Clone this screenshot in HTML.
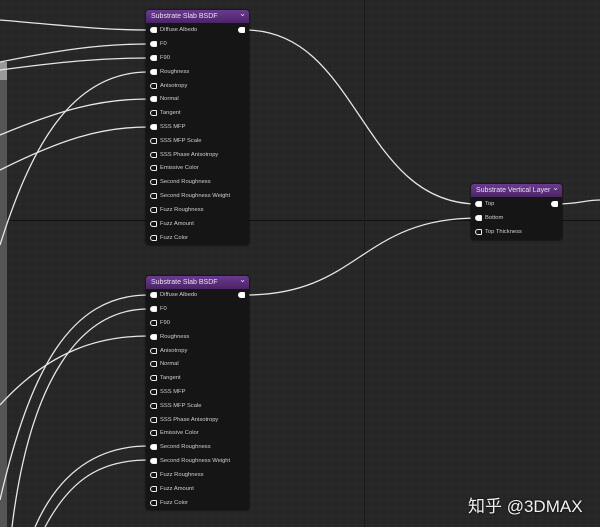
<!DOCTYPE html><html><head><style>
body{margin:0;width:600px;height:527px;overflow:hidden;background:#262626;font-family:"Liberation Sans",sans-serif}
.n{position:absolute;background:#151515;border-radius:3px;box-shadow:0 0 2px #000}
.h{height:13px;background:linear-gradient(#6a3a90,#4b2466);color:#e8e0f0;font-size:7px;line-height:13px;padding-left:5px;border-radius:3px 3px 0 0;position:relative}
.h:after{content:"⌄";position:absolute;right:3px;top:-3px;font-size:8px}
.r{position:absolute;left:14px;font-size:5.8px;color:#cfcfcf;white-space:nowrap}
.p{position:absolute;left:-10px;top:-0.5px;width:5px;height:4px;border:1.2px solid #eee;border-radius:3px 1px 1px 3px;box-sizing:content-box}
.f{background:#fff}
.o{position:absolute;width:7px;height:6px;background:#fff;border-radius:3px 1px 1px 3px}
</style></head><body>
<svg width="600" height="527" style="position:absolute;left:0;top:0">
<defs><pattern id="g" width="8" height="8" patternUnits="userSpaceOnUse" x="5" y="5"><path d="M8 0V8M0 8H8" stroke="#2f2f2f" stroke-width="1"/></pattern></defs>
<rect width="600" height="527" fill="url(#g)"/>
<line x1="0" y1="220.5" x2="600" y2="220.5" stroke="#111"/>
<line x1="364.5" y1="0" x2="364.5" y2="527" stroke="#1a1a1a"/>
<rect x="0" y="62" width="7" height="465" fill="#555"/>
<rect x="0" y="62" width="7" height="18" fill="#999"/>
<g fill="none" stroke="#e6e6e6" stroke-width="1.3">
<path d="M0 20C60 25 100 30 148 30"/>
<path d="M0 62C60 50 100 44 148 44"/>
<path d="M0 70C60 62 100 58 148 58"/>
<path d="M0 245C30 150 70 72 148 72"/>
<path d="M0 135C60 110 100 99 148 99"/>
<path d="M0 170C60 140 100 127 148 127"/>
<path d="M0 500C30 370 70 295 148 295"/>
<path d="M12 527C30 380 80 309 148 309"/>
<path d="M0 405C50 350 100 336 148 336"/>
<path d="M35 527C60 470 100 446 148 446"/>
<path d="M45 527C70 480 100 460 148 460"/>
<path d="M245 30C360 30 360 204 478 204"/>
<path d="M245 295C360 295 360 218 478 218"/>
<path d="M556 204C580 204 585 200 600 200"/>
</g>
</svg>

<div class="n" style="left:146px;top:10px;width:103px;height:235px"><div class="h">Substrate Slab BSDF</div>
<div class="o" style="left:92px;top:17px"></div>
<div class="r" style="top:17px"><i class="p f"></i>Diffuse Albedo</div>
<div class="r" style="top:31px"><i class="p f"></i>F0</div>
<div class="r" style="top:45px"><i class="p f"></i>F90</div>
<div class="r" style="top:59px"><i class="p f"></i>Roughness</div>
<div class="r" style="top:73px"><i class="p"></i>Anisotropy</div>
<div class="r" style="top:86px"><i class="p f"></i>Normal</div>
<div class="r" style="top:100px"><i class="p"></i>Tangent</div>
<div class="r" style="top:114px"><i class="p f"></i>SSS MFP</div>
<div class="r" style="top:128px"><i class="p"></i>SSS MFP Scale</div>
<div class="r" style="top:142px"><i class="p"></i>SSS Phase Anisotropy</div>
<div class="r" style="top:155px"><i class="p"></i>Emissive Color</div>
<div class="r" style="top:169px"><i class="p"></i>Second Roughness</div>
<div class="r" style="top:183px"><i class="p"></i>Second Roughness Weight</div>
<div class="r" style="top:197px"><i class="p"></i>Fuzz Roughness</div>
<div class="r" style="top:211px"><i class="p"></i>Fuzz Amount</div>
<div class="r" style="top:225px"><i class="p"></i>Fuzz Color</div>
</div>

<div class="n" style="left:146px;top:276px;width:103px;height:234px"><div class="h">Substrate Slab BSDF</div>
<div class="o" style="left:92px;top:16px"></div>
<div class="r" style="top:16px"><i class="p f"></i>Diffuse Albedo</div>
<div class="r" style="top:30px"><i class="p f"></i>F0</div>
<div class="r" style="top:44px"><i class="p"></i>F90</div>
<div class="r" style="top:58px"><i class="p f"></i>Roughness</div>
<div class="r" style="top:72px"><i class="p"></i>Anisotropy</div>
<div class="r" style="top:85px"><i class="p"></i>Normal</div>
<div class="r" style="top:99px"><i class="p"></i>Tangent</div>
<div class="r" style="top:113px"><i class="p"></i>SSS MFP</div>
<div class="r" style="top:127px"><i class="p"></i>SSS MFP Scale</div>
<div class="r" style="top:141px"><i class="p"></i>SSS Phase Anisotropy</div>
<div class="r" style="top:154px"><i class="p"></i>Emissive Color</div>
<div class="r" style="top:168px"><i class="p f"></i>Second Roughness</div>
<div class="r" style="top:182px"><i class="p f"></i>Second Roughness Weight</div>
<div class="r" style="top:196px"><i class="p"></i>Fuzz Roughness</div>
<div class="r" style="top:210px"><i class="p"></i>Fuzz Amount</div>
<div class="r" style="top:224px"><i class="p"></i>Fuzz Color</div>
</div>

<div class="n" style="left:471px;top:184px;width:91px;height:56px"><div class="h">Substrate Vertical Layer</div>
<div class="o" style="left:80px;top:17px"></div>
<div class="r" style="top:17px"><i class="p f"></i>Top</div>
<div class="r" style="top:31px"><i class="p f"></i>Bottom</div>
<div class="r" style="top:45px"><i class="p"></i>Top Thickness</div>
</div>

<div style="position:absolute;left:468px;top:492px;color:#f2f2f2;font-size:17px;font-family:'Liberation Sans','Noto Sans CJK SC',sans-serif;text-shadow:0 0 2px #000">知乎 @3DMAX</div>
</body></html>
